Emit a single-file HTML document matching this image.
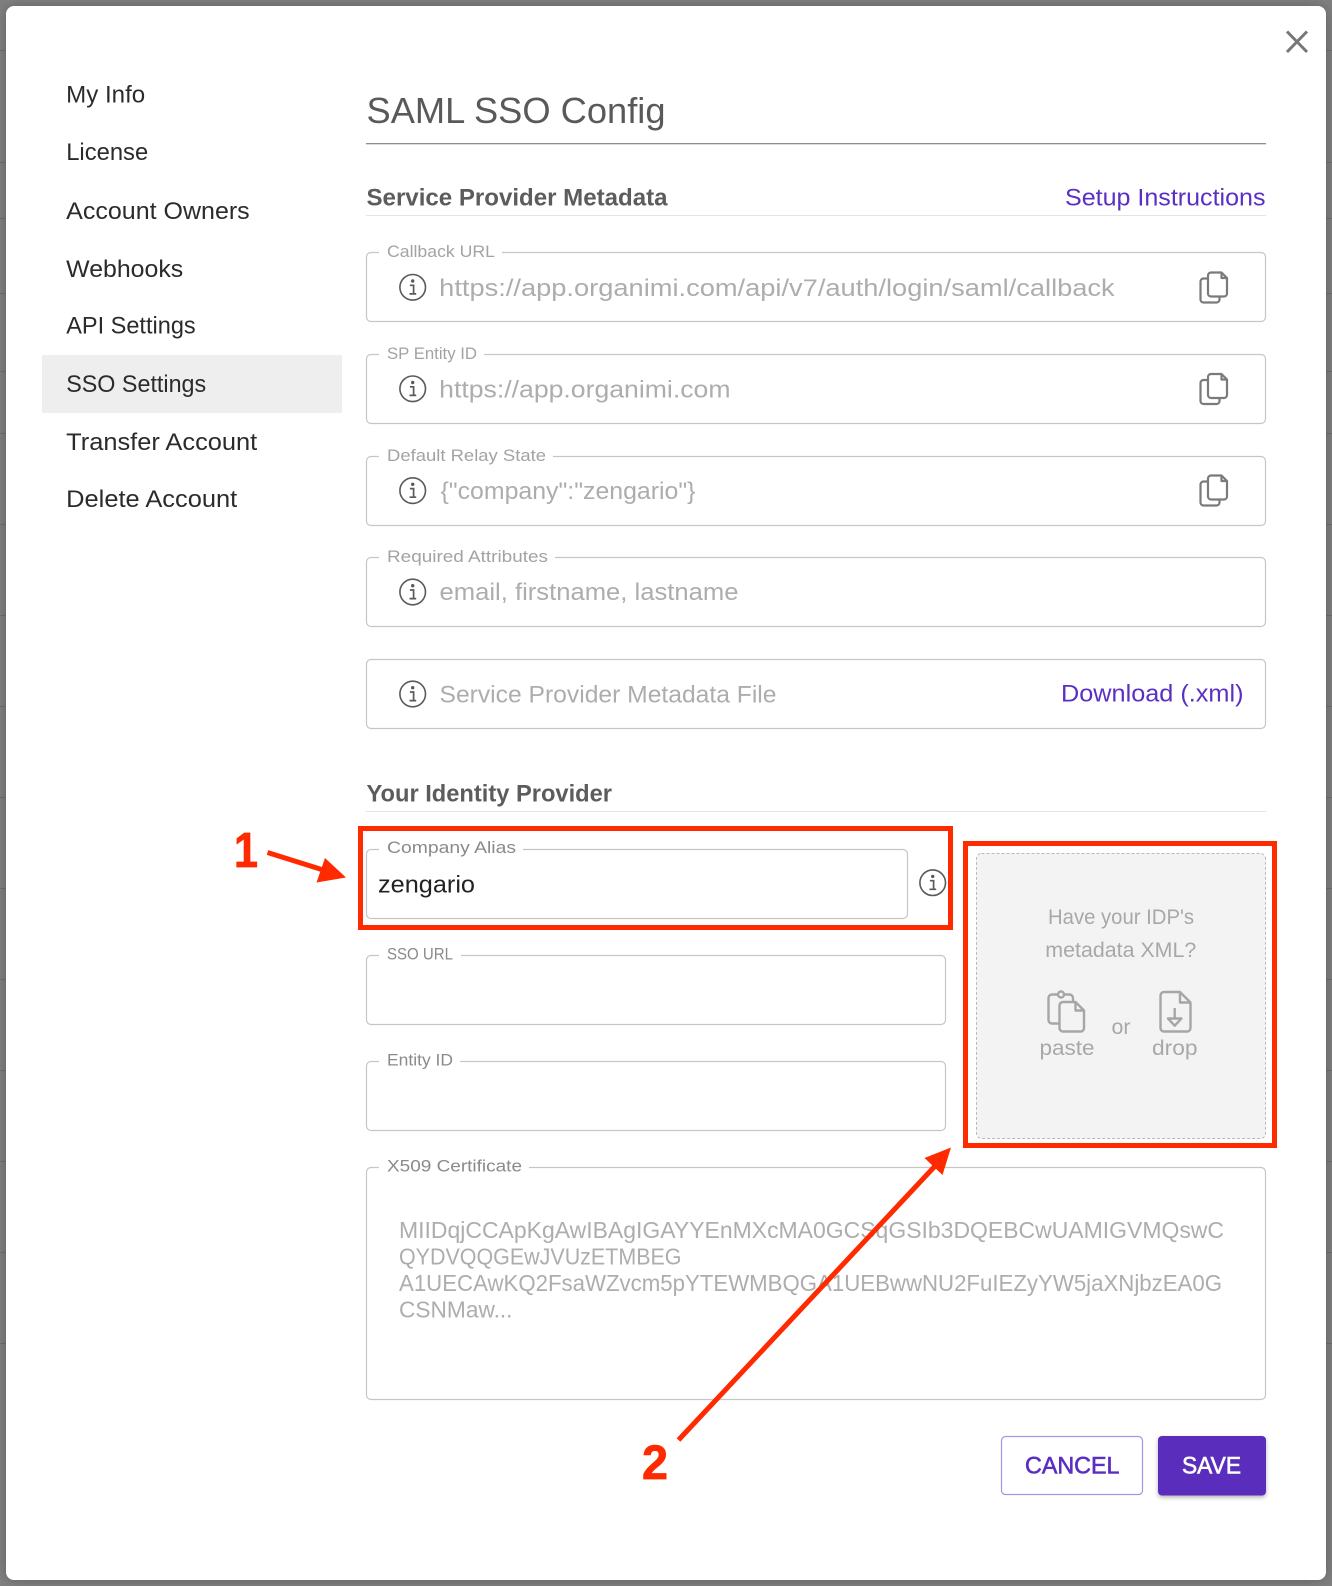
<!DOCTYPE html>
<html><head><meta charset="utf-8"><title>SAML SSO Config</title>
<style>
html,body{margin:0;padding:0;width:1332px;height:1586px;overflow:hidden;background:#808080}
.bg{position:absolute;left:0;right:0;height:1px;background:#6e6e6e}
.modal{position:absolute;left:6px;top:6px;width:1320px;height:1574px;background:#fff;border-radius:8px;box-shadow:0 0 12px rgba(0,0,0,.25)}
svg{position:absolute;left:0;top:0}
text{font-family:"Liberation Sans",sans-serif}
.nav{font-size:24px;fill:#2b2b2b}
.lab{font-size:17px;fill:#a3a3a3}
.lab2{font-size:17px;fill:#8a8a8a}
.val{font-size:24px;fill:#adadad}
.cert{font-size:23.5px;fill:#adadad}
.h{font-size:24px;font-weight:bold;fill:#5c5c5c}
.link{font-size:24px;fill:#5a2fc2}
.dz{font-size:21px;fill:#a8a8a8}
.f{fill:none;stroke:#c6c6c6;stroke-width:1.2}
</style></head>
<body>
<div class="bg" style="top:50px"></div><div class="bg" style="top:162px"></div><div class="bg" style="top:218px"></div><div class="bg" style="top:293px"></div><div class="bg" style="top:371px"></div><div class="bg" style="top:433px"></div><div class="bg" style="top:524px"></div><div class="bg" style="top:615px"></div><div class="bg" style="top:706px"></div><div class="bg" style="top:797px"></div><div class="bg" style="top:888px"></div><div class="bg" style="top:979px"></div><div class="bg" style="top:1070px"></div><div class="bg" style="top:1161px"></div><div class="bg" style="top:1252px"></div><div class="bg" style="top:1343px"></div>
<div class="modal"></div>
<svg width="1332" height="1586" viewBox="0 0 1332 1586" xmlns="http://www.w3.org/2000/svg">
<defs>
<g id="info"><circle cx="0" cy="0" r="12.8" fill="none" stroke="#5a5a5a" stroke-width="1.6"/><circle cx="0" cy="-6.300" r="1.700" fill="#5a5a5a"/><path d="M-2.800-2H0.900V6.200M-3.200 6.600H3.500" fill="none" stroke="#5a5a5a" stroke-width="1.700"/></g>
<g id="copy" fill="none" stroke="#7a7a7a" stroke-width="2.200" stroke-linejoin="round"><path d="M-5.300 6.500H-10a3 3 0 0 0-3 3v18a3 3 0 0 0 3 3H3a3 3 0 0 0 3-3v-2"/><path d="M-2.500 0.500H8L13.500 6V21.500a3 3 0 0 1-3 3H-2.500a3 3 0 0 1-3-3V3.500a3 3 0 0 1 3-3Z"/><path d="M8 0.500V6H13.500"/></g>
</defs>

<!-- sidebar -->
<rect x="42" y="355" width="300" height="58" fill="#eeeeee"/>
<text class="nav" x="66.200" y="102.400" textLength="79" lengthAdjust="spacingAndGlyphs">My Info</text>
<text class="nav" x="66.200" y="159.800" textLength="82" lengthAdjust="spacingAndGlyphs">License</text>
<text class="nav" x="66.200" y="219" textLength="183.500" lengthAdjust="spacingAndGlyphs">Account Owners</text>
<text class="nav" x="66.200" y="277" textLength="117" lengthAdjust="spacingAndGlyphs">Webhooks</text>
<text class="nav" x="66.200" y="333.400" textLength="129.500" lengthAdjust="spacingAndGlyphs">API Settings</text>
<text class="nav" x="66.200" y="392" textLength="140" lengthAdjust="spacingAndGlyphs">SSO Settings</text>
<text class="nav" x="66.200" y="450" textLength="191" lengthAdjust="spacingAndGlyphs">Transfer Account</text>
<text class="nav" x="66.200" y="507" textLength="171" lengthAdjust="spacingAndGlyphs">Delete Account</text>

<!-- close -->
<path d="M1287 31.500L1307 52M1307 31.500L1287 52" stroke="#777" stroke-width="3" fill="none"/>

<!-- title -->
<text x="366.500" y="122.800" font-size="36" fill="#595959" textLength="299" lengthAdjust="spacingAndGlyphs">SAML SSO Config</text>
<rect x="366" y="143" width="900" height="1.300" fill="#8e8e8e"/>

<text class="h" x="366.500" y="205.500" textLength="301" lengthAdjust="spacingAndGlyphs">Service Provider Metadata</text>
<text class="link" x="1065" y="205.500" textLength="200.500" lengthAdjust="spacingAndGlyphs">Setup Instructions</text>
<rect x="366" y="215" width="900" height="1" fill="#e4e4e4"/>

<!-- SP fields -->
<path class="f" d="M502 252.500H1261a4.500 4.500 0 0 1 4.500 4.500V317a4.500 4.500 0 0 1-4.500 4.500H371a4.500 4.500 0 0 1-4.500-4.500V257a4.500 4.500 0 0 1 4.500-4.500H379"/>
<text class="lab" x="387" y="256.800" textLength="108" lengthAdjust="spacingAndGlyphs">Callback URL</text>
<use href="#info" x="412.700" y="287.300"/>
<text class="val" x="439.200" y="295.800" textLength="675.500" lengthAdjust="spacingAndGlyphs">https://app.organimi.com/api/v7/auth/login/saml/callback</text>
<use href="#copy" x="1213.500" y="272"/>

<path class="f" d="M484 354.500H1261a4.500 4.500 0 0 1 4.500 4.500V419a4.500 4.500 0 0 1-4.500 4.500H371a4.500 4.500 0 0 1-4.500-4.500V359a4.500 4.500 0 0 1 4.500-4.500H379"/>
<text class="lab" x="387" y="358.800" textLength="90" lengthAdjust="spacingAndGlyphs">SP Entity ID</text>
<use href="#info" x="412.700" y="388.800"/>
<text class="val" x="439.200" y="397.400" textLength="291.300" lengthAdjust="spacingAndGlyphs">https://app.organimi.com</text>
<use href="#copy" x="1213.500" y="373.500"/>

<path class="f" d="M553 456.500H1261a4.500 4.500 0 0 1 4.500 4.500V521a4.500 4.500 0 0 1-4.500 4.500H371a4.500 4.500 0 0 1-4.500-4.500V461a4.500 4.500 0 0 1 4.500-4.500H379"/>
<text class="lab" x="387" y="460.800" textLength="159" lengthAdjust="spacingAndGlyphs">Default Relay State</text>
<use href="#info" x="412.700" y="490.600"/>
<text class="val" x="440.500" y="499" textLength="255" lengthAdjust="spacingAndGlyphs">{"company":"zengario"}</text>
<use href="#copy" x="1213.500" y="475"/>

<path class="f" d="M555 557.500H1261a4.500 4.500 0 0 1 4.500 4.500V622a4.500 4.500 0 0 1-4.500 4.500H371a4.500 4.500 0 0 1-4.500-4.500V562a4.500 4.500 0 0 1 4.500-4.500H379"/>
<text class="lab" x="387" y="561.800" textLength="161" lengthAdjust="spacingAndGlyphs">Required Attributes</text>
<use href="#info" x="412.700" y="592"/>
<text class="val" x="439.500" y="600.200" textLength="299" lengthAdjust="spacingAndGlyphs">email, firstname, lastname</text>

<rect class="f" x="366.500" y="659.500" width="899" height="69" rx="4.500"/>
<use href="#info" x="412.700" y="694"/>
<text class="val" x="439.500" y="702.700" textLength="337" lengthAdjust="spacingAndGlyphs">Service Provider Metadata File</text>
<text class="link" x="1061" y="701.700" textLength="182.500" lengthAdjust="spacingAndGlyphs">Download (.xml)</text>

<!-- IdP -->
<text class="h" x="366.500" y="801.700" textLength="245.500" lengthAdjust="spacingAndGlyphs">Your Identity Provider</text>
<rect x="366" y="811" width="900" height="1" fill="#e4e4e4"/>

<path class="f" d="M523 849.500H903a4.500 4.500 0 0 1 4.500 4.500V914a4.500 4.500 0 0 1-4.500 4.500H371a4.500 4.500 0 0 1-4.500-4.500V854a4.500 4.500 0 0 1 4.500-4.500H379"/>
<text class="lab2" x="387" y="852.800" textLength="129" lengthAdjust="spacingAndGlyphs">Company Alias</text>
<text x="378" y="892.500" font-size="24" fill="#222" textLength="97" lengthAdjust="spacingAndGlyphs">zengario</text>
<use href="#info" x="932.700" y="882.700"/>

<path class="f" d="M461 955.500H941a4.500 4.500 0 0 1 4.500 4.500V1020a4.500 4.500 0 0 1-4.500 4.500H371a4.500 4.500 0 0 1-4.500-4.500V960a4.500 4.500 0 0 1 4.500-4.500H379"/>
<text class="lab2" x="387" y="959.700" textLength="66" lengthAdjust="spacingAndGlyphs">SSO URL</text>

<path class="f" d="M460 1061.500H941a4.500 4.500 0 0 1 4.500 4.500V1126a4.500 4.500 0 0 1-4.500 4.500H371a4.500 4.500 0 0 1-4.500-4.500V1066a4.500 4.500 0 0 1 4.500-4.500H379"/>
<text class="lab2" x="387" y="1065.700" textLength="66" lengthAdjust="spacingAndGlyphs">Entity ID</text>

<path class="f" d="M529 1167.500H1261a4.500 4.500 0 0 1 4.500 4.500V1395a4.500 4.500 0 0 1-4.500 4.500H371a4.500 4.500 0 0 1-4.500-4.500V1172a4.500 4.500 0 0 1 4.500-4.500H379"/>
<text class="lab2" x="387" y="1171.700" textLength="135" lengthAdjust="spacingAndGlyphs">X509 Certificate</text>
<text class="cert" x="399" y="1238" textLength="825" lengthAdjust="spacingAndGlyphs">MIIDqjCCApKgAwIBAgIGAYYEnMXcMA0GCSqGSIb3DQEBCwUAMIGVMQswC</text>
<text class="cert" x="399" y="1264.300" textLength="282.500" lengthAdjust="spacingAndGlyphs">QYDVQQGEwJVUzETMBEG</text>
<text class="cert" x="399" y="1291.200" textLength="823" lengthAdjust="spacingAndGlyphs">A1UECAwKQ2FsaWZvcm5pYTEWMBQGA1UEBwwNU2FuIEZyYW5jaXNjbzEA0G</text>
<text class="cert" x="399" y="1317.300" textLength="113.500" lengthAdjust="spacingAndGlyphs">CSNMaw...</text>

<!-- dropzone -->
<rect x="976.500" y="853.500" width="289" height="285" rx="5" fill="#f3f3f3" stroke="#b9b9b9" stroke-width="1" stroke-dasharray="3 2"/>
<text class="dz" x="1048" y="924" textLength="146" lengthAdjust="spacingAndGlyphs">Have your IDP's</text>
<text class="dz" x="1045.300" y="957" textLength="151" lengthAdjust="spacingAndGlyphs">metadata XML?</text>
<text class="dz" x="1039.500" y="1055" textLength="55" lengthAdjust="spacingAndGlyphs">paste</text>
<text class="dz" x="1111.500" y="1034" textLength="19" lengthAdjust="spacingAndGlyphs">or</text>
<text class="dz" x="1152" y="1055" textLength="45.500" lengthAdjust="spacingAndGlyphs">drop</text>
<g fill="none" stroke="#a6a6a6" stroke-width="2.400" stroke-linejoin="round">
<path d="M1059.500 1023.500H1052a3.500 3.500 0 0 1-3.500-3.500V998a3.500 3.500 0 0 1 3.500-3.500H1069.500a3.500 3.500 0 0 1 3.500 3.500V1002"/>
<circle cx="1061" cy="994.500" r="3" fill="#f3f3f3"/>
<path d="M1063 1002H1075.500L1084 1010.500V1028a3.500 3.500 0 0 1-3.500 3.500H1063a3.500 3.500 0 0 1-3.500-3.500V1005.500a3.500 3.500 0 0 1 3.500-3.500Z"/>
<path d="M1075.500 1002V1010.500H1084"/>
<path d="M1164 992H1180L1190.500 1002.500V1028a3.500 3.500 0 0 1-3.500 3.500H1164a3.500 3.500 0 0 1-3.500-3.500V995.500a3.500 3.500 0 0 1 3.500-3.500Z"/>
<path d="M1180 992V1002.500H1190.500"/>
<path d="M1174.700 1008V1018.500M1168 1018.500H1181.400L1174.700 1025.700Z"/>
</g>

<!-- buttons -->
<rect x="1001.500" y="1436.500" width="141" height="58" rx="4" fill="#fff" stroke="#a893e6" stroke-width="1.200"/>
<text x="1025" y="1473.300" font-size="24" fill="#5a2fc2" stroke="#5a2fc2" stroke-width=".6" textLength="94.500" lengthAdjust="spacingAndGlyphs">CANCEL</text>
<rect x="1158" y="1436" width="108" height="59.500" rx="4" fill="#5b2dbd" style="filter:drop-shadow(0 2px 2px rgba(0,0,0,.3))"/>
<text x="1182" y="1473.300" font-size="24" fill="#fff" stroke="#fff" stroke-width=".6" textLength="59" lengthAdjust="spacingAndGlyphs">SAVE</text>

<!-- annotations -->
<rect x="360.500" y="828.500" width="590" height="99" fill="none" stroke="#ff2a00" stroke-width="5"/>
<rect x="965.500" y="843.500" width="309" height="302" fill="none" stroke="#ff2a00" stroke-width="5"/>
<path d="M267.500 852.500L328 871.500" stroke="#ff2a00" stroke-width="5" fill="none"/>
<path d="M346 877.500L325 858L316.500 882.500Z" fill="#ff2a00"/>
<path d="M678.500 1440L936 1165" stroke="#ff2a00" stroke-width="5" fill="none"/>
<path d="M951 1147.500L924.500 1158L942.500 1175Z" fill="#ff2a00"/>
<text x="234" y="867" font-size="49" font-weight="bold" fill="#ff2a00" stroke="#ff2a00" stroke-width=".8" textLength="24" lengthAdjust="spacingAndGlyphs">1</text>
<text x="642" y="1479" font-size="48" font-weight="bold" fill="#ff2a00" stroke="#ff2a00" stroke-width=".8" textLength="26" lengthAdjust="spacingAndGlyphs">2</text>
</svg>
</body></html>
